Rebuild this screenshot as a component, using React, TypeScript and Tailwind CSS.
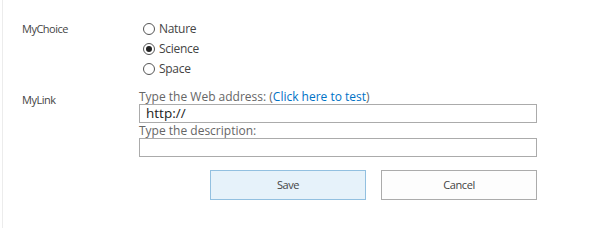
const font = { fontFamily: '"Open Sans", "Noto Sans", sans-serif' };

function Radio({ label, checked }: { label: string; checked?: boolean }) {
  return (
    <label className="flex h-5 items-center gap-[4px] text-[12px] tracking-[-0.3px] text-[#444]">
      <span className="flex size-[12px] items-center justify-center rounded-full border border-[#555] bg-white">
        {checked && <span className="size-[6px] rounded-full bg-[#222]" />}
      </span>
      {label}
    </label>
  );
}

export default function App() {
  return (
    <div className="h-[240px] w-[590px] bg-white" style={font}>
      <div className="ml-[2px] h-[228px] border-l border-[#ececec] pl-[19px]">
        <div className="grid grid-cols-[117px_398px] pt-[19px]">
          <div className="text-[11px] leading-[20px] tracking-[-0.5px] text-[#444]">MyChoice</div>
          <div className="flex flex-col pl-[4px]">
            <Radio label="Nature" />
            <Radio label="Science" checked />
            <Radio label="Space" />
          </div>

          <div className="pt-[11px] text-[11px] leading-[20px] tracking-[-0.5px] text-[#444]">MyLink</div>
          <div className="flex flex-col pt-[10px]">
            <div className="text-[12px] leading-[15px] text-[#666]">
              Type the Web address: (
              <a className="text-[#0072c6]" href="#">
                Click here to test
              </a>
              )
            </div>
            <input
              defaultValue="http://"
              className="h-[19px] border border-[#ababab] px-[6px] text-[13.5px] text-[#222] outline-none"
              style={font}
            />
            <div className="text-[12px] leading-[15px] text-[#666]">Type the description:</div>
            <input className="h-[19px] border border-[#ababab] px-[6px] text-[13px] outline-none" style={font} />
            <div className="flex gap-[15px] pl-[71px] pt-[13px]">
              <button className="h-[30px] w-[156px] border border-[#92c0e0] bg-[#e6f2fa] text-[11px] tracking-[-0.4px] text-[#444]">
                Save
              </button>
              <button className="h-[30px] w-[156px] border border-[#ababab] bg-[#fdfdfd] text-[11px] tracking-[-0.4px] text-[#444]">
                Cancel
              </button>
            </div>
          </div>
        </div>
      </div>
    </div>
  );
}
